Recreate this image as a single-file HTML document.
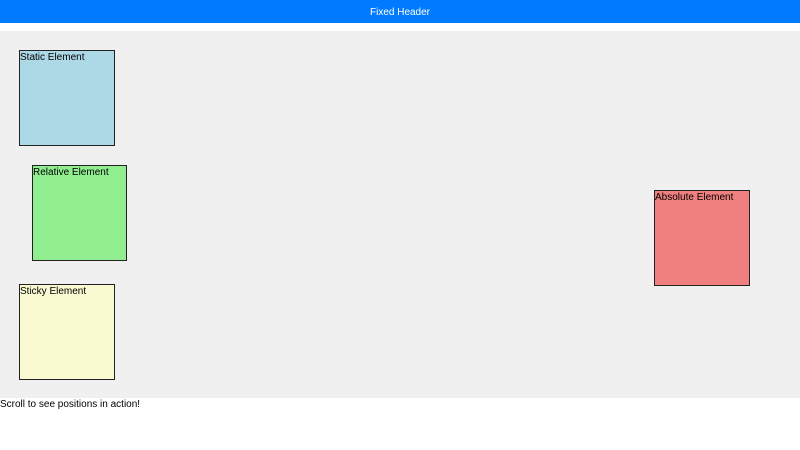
<!DOCTYPE html>
<html><head><style>
body{margin:0;width:800px;height:450px;overflow:hidden;background:#fff;font-family:"Liberation Sans",sans-serif;font-size:10px;position:relative}
.h{position:absolute;left:0;top:0;width:800px;height:23px;background:#007bff;color:#fff;text-align:center;line-height:25px;font-size:10px}
.c{position:absolute;left:0;top:31px;width:800px;height:367px;background:#f0f0f0}
.b{position:absolute;width:94px;height:94px;border:1px solid #222;line-height:13px;color:#000}
.t{position:absolute;left:0;top:398px;font-size:10px;line-height:14px}
</style></head><body>
<div class="h">Fixed Header</div>
<div class="c"></div>
<div class="b" style="left:19px;top:50px;background:#add8e6">Static Element</div>
<div class="b" style="left:32px;top:165px;width:93px;background:#90ee90">Relative Element</div>
<div class="b" style="left:19px;top:284px;background:#fafad2">Sticky Element</div>
<div class="b" style="left:654px;top:190px;background:#f08080">Absolute Element</div>
<div class="t">Scroll to see positions in action!</div>
</body></html>
